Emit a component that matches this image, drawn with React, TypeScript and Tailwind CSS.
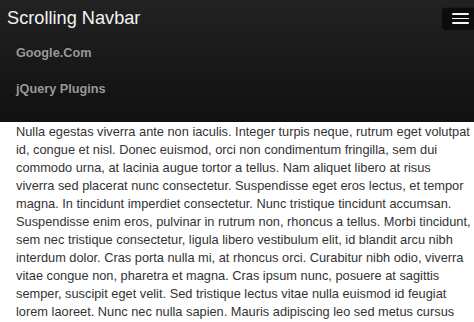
import React from "react";

const lines = [
  "Nulla egestas viverra ante non iaculis. Integer turpis neque, rutrum eget volutpat",
  "id, congue et nisl. Donec euismod, orci non condimentum fringilla, sem dui",
  "commodo urna, at lacinia augue tortor a tellus. Nam aliquet libero at risus",
  "viverra sed placerat nunc consectetur. Suspendisse eget eros lectus, et tempor",
  "magna. In tincidunt imperdiet consectetur. Nunc tristique tincidunt accumsan.",
  "Suspendisse enim eros, pulvinar in rutrum non, rhoncus a tellus. Morbi tincidunt,",
  "sem nec tristique consectetur, ligula libero vestibulum elit, id blandit arcu nibh",
  "interdum dolor. Cras porta nulla mi, at rhoncus orci. Curabitur nibh odio, viverra",
  "vitae congue non, pharetra et magna. Cras ipsum nunc, posuere at sagittis",
  "semper, suscipit eget velit. Sed tristique lectus vitae nulla euismod id feugiat",
  "lorem laoreet. Nunc nec nulla sapien. Mauris adipiscing leo sed metus cursus",
];

export default function App() {
  return (
    <div className="w-[474px] h-[322px] overflow-hidden bg-white font-['Liberation_Sans',Arial,sans-serif]">
      <nav className="h-[122px] bg-gradient-to-b from-[#222222] to-[#111111] pb-[15px]">
        <div className="flex h-[35px] items-start">
          <a className="block pl-[7px] pt-[8px] text-[18.2px] leading-[20px] text-[#f2f2f2]">
            Scrolling Navbar
          </a>
          <button className="ml-auto mt-[7px] flex h-[23px] w-[32px] flex-col justify-center gap-[2.7px] rounded-l-[4px] bg-[#0c0c0c] pl-[10px] shadow-[inset_0_1px_0_rgba(255,255,255,0.06)]">
            <span className="block h-[1.8px] w-[17px] rounded-[1px] bg-[#f5f5f5]" />
            <span className="block h-[1.8px] w-[17px] rounded-[1px] bg-[#f5f5f5]" />
            <span className="block h-[1.8px] w-[17px] rounded-[1px] bg-[#f5f5f5]" />
          </button>
        </div>
        <ul>
          <li>
            <a className="block h-[36px] pl-[16px] text-[12.7px] font-bold leading-[36px] text-[#999999] [text-shadow:0_-1px_0_rgba(0,0,0,0.25)]">
              Google.Com
            </a>
          </li>
          <li>
            <a className="block h-[36px] pl-[16px] text-[12.7px] font-bold leading-[36px] text-[#999999] [text-shadow:0_-1px_0_rgba(0,0,0,0.25)]">
              jQuery Plugins
            </a>
          </li>
        </ul>
      </nav>
      <p className="pl-[16px] pt-[1.2px] text-[12.8px] leading-[18px] text-[#333333]">
        {lines.map((l, i) => (
          <span key={i} className="block whitespace-nowrap">
            {l}
          </span>
        ))}
      </p>
    </div>
  );
}
